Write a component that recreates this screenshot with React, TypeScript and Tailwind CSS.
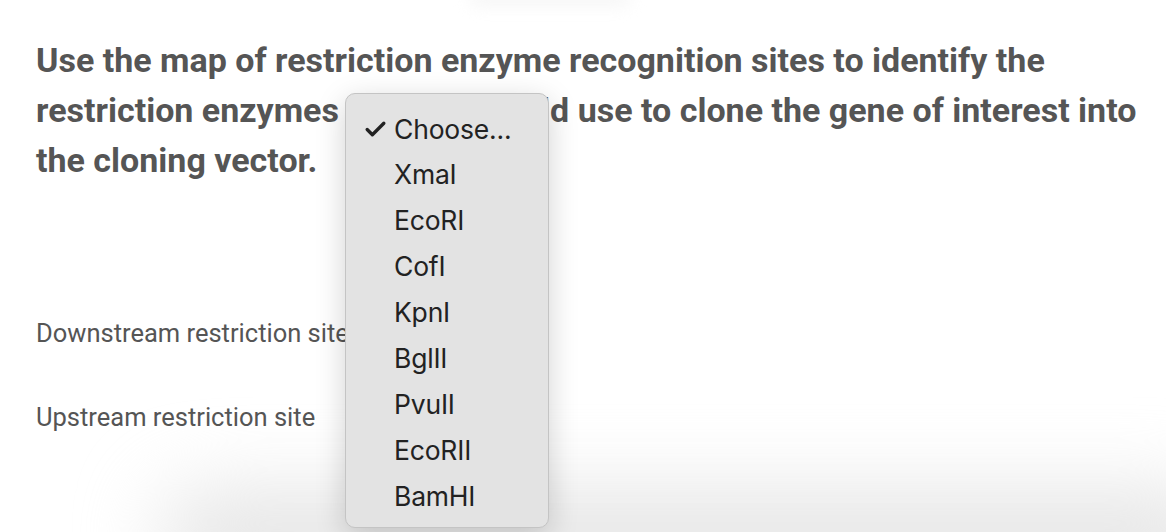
import { Check } from "lucide-react";

const options = ["Choose...", "XmaI", "EcoRI", "CofI", "KpnI", "BglII", "PvuII", "EcoRII", "BamHI"];

function SelectBox({ className = "" }: { className?: string }) {
  return (
    <span className={`inline-block align-middle rounded-md border border-[#8a8a8a] bg-white ${className}`} />
  );
}

export default function App() {
  return (
    <div className="relative w-[1166px] h-[532px] overflow-hidden bg-white font-['Roboto',sans-serif]">
      {/* page shadow at the bottom */}
      <div className="absolute left-[160px] right-[-60px] bottom-[-50px] h-[90px] rounded-full bg-[#e4e4e4] blur-2xl" />
      <div className="absolute left-[470px] top-[-6px] w-[160px] h-[10px] rounded-full bg-[#f2f2f2] blur-sm" />

      <div className="relative pl-[36px] pt-[35px]">
        <p className="w-[1120px] text-[34px] leading-[50px] font-bold text-[#555555]">
          Use the map of restriction enzyme recognition sites to identify the restriction enzymes{" "}
          <SelectBox className="w-[122px] h-[36px]" /> would use to clone the gene of interest into the cloning vector.
        </p>

        <div className="mt-[120px] flex flex-col gap-[28px]">
          {["Downstream restriction site", "Upstream restriction site"].map((label) => (
            <div key={label} className="flex items-center h-[56px]">
              <span className="w-[312px] shrink-0 whitespace-nowrap text-[25.5px] text-[#555555]">{label}</span>
              <SelectBox className="w-[201px] h-[56px]" />
            </div>
          ))}
        </div>
      </div>

      {/* open option list */}
      <div className="absolute left-[345px] top-[93px] w-[204px] h-[435px] rounded-[10px] border border-[#c4c4c4] bg-[#e3e3e3] pt-[12.5px] shadow-[0_8px_30px_rgba(0,0,0,0.18)] font-['Inter',sans-serif]">
        {options.map((o, i) => (
          <div key={o} className="flex items-center h-[45.9px] text-[26.5px] text-[#222222] tracking-[-0.2px]">
            <span className="w-[48px] flex justify-end pr-[6px]">
              {i === 0 && <Check size={25} strokeWidth={3.2} />}
            </span>
            <span>{o}</span>
          </div>
        ))}
      </div>
    </div>
  );
}
